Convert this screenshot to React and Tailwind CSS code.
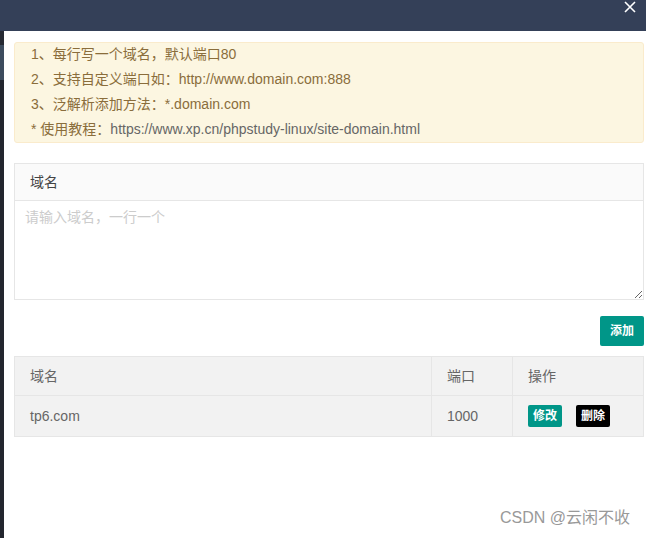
import React from 'react'

const FONT = { fontFamily: '"Liberation Sans", "Noto Sans CJK SC", sans-serif' }

const tips = [
    { text: '1、每行写一个域名，默认端口80' },
    { text: '2、支持自定义端口如：http://www.domain.com:888' },
    { text: '3、泛解析添加方法：*.domain.com' },
    { text: '* 使用教程：', link: 'https://www.xp.cn/phpstudy-linux/site-domain.html' },
]

const rows = [{ domain: 'tp6.com', port: '1000' }]

export default function App() {
    return (
        <div className="relative w-[646px] h-[538px] overflow-hidden bg-[#23262e] text-[14px]" style={FONT}>
            {/* title bar */}
            <div className="h-[31px] bg-[#344058] flex justify-end">
                <button className="w-[24px] h-[14px] mr-[4px] flex items-center justify-center text-white">
                    <svg width="12" height="12" viewBox="0 0 12 12" fill="none" stroke="currentColor" strokeWidth="1.6">
                        <path d="M1 1 L11 11 M11 1 L1 11" />
                    </svg>
                </button>
            </div>

            <div className="flex h-[507px]">
                {/* left strip of the page behind */}
                <div className="w-[4px] flex flex-col">
                    <div className="h-[14px] bg-[#262a33]" />
                    <div className="h-[35px] bg-[#3d4c5e]" />
                    <div className="flex-1 bg-[#23262e]" />
                </div>

                {/* dialog body */}
                <div className="flex-1 bg-white pl-[10px] pr-[2px] pt-[11px]">
                    <div className="h-[101px] rounded-[3px] border border-[#faebcc] bg-[#fcf6e1] pl-[16px] pt-[1px] text-[#8a6d3b]">
                        {tips.map((t, i) => (
                            <div key={i} className="h-[25px] leading-[20px]">
                                {t.text}
                                {t.link && <span className="text-[#666]">{t.link}</span>}
                            </div>
                        ))}
                    </div>

                    <div className="mt-[20px] border border-[#e6e6e6]">
                        <div className="h-[37px] bg-[#fafafa] border-b border-[#e6e6e6] pl-[15px] flex items-center text-[#444]">
                            域名
                        </div>
                        <textarea
                            className="block w-full h-[98px] px-[10px] py-[6px] outline-none text-[#333] placeholder:text-[#ccc] resize-y"
                            placeholder="请输入域名，一行一个"
                            style={FONT}
                        />
                    </div>

                    <div className="flex justify-end mt-[16px]">
                        <button className="h-[30px] px-[10px] rounded-[2px] bg-[#009688] text-white text-[12px] font-bold">
                            添加
                        </button>
                    </div>

                    <table className="mt-[10px] w-full border-collapse text-[#666]">
                        <thead>
                            <tr className="bg-[#f2f2f2] h-[39px]">
                                <th className="border border-[#e6e6e6] font-normal text-left pl-[15px] w-[417px]">域名</th>
                                <th className="border border-[#e6e6e6] font-normal text-left pl-[15px] w-[81px]">端口</th>
                                <th className="border border-[#e6e6e6] font-normal text-left pl-[15px]">操作</th>
                            </tr>
                        </thead>
                        <tbody>
                            {rows.map((r) => (
                                <tr key={r.domain} className="bg-[#f2f2f2] h-[41px]">
                                    <td className="border border-[#e6e6e6] pl-[15px]">{r.domain}</td>
                                    <td className="border border-[#e6e6e6] pl-[15px]">{r.port}</td>
                                    <td className="border border-[#e6e6e6] pl-[15px]">
                                        <div className="flex gap-[14px]">
                                            <button className="h-[22px] px-[5px] rounded-[2px] bg-[#009688] text-white text-[12px] font-bold">修改</button>
                                            <button className="h-[22px] px-[5px] rounded-[2px] bg-black text-white text-[12px] font-bold">删除</button>
                                        </div>
                                    </td>
                                </tr>
                            ))}
                        </tbody>
                    </table>
                </div>
            </div>

            {/* screenshot watermark */}
            <div className="absolute right-[16px] bottom-[8px] text-[16px] text-[#999]">CSDN @云闲不收</div>
        </div>
    )
}
